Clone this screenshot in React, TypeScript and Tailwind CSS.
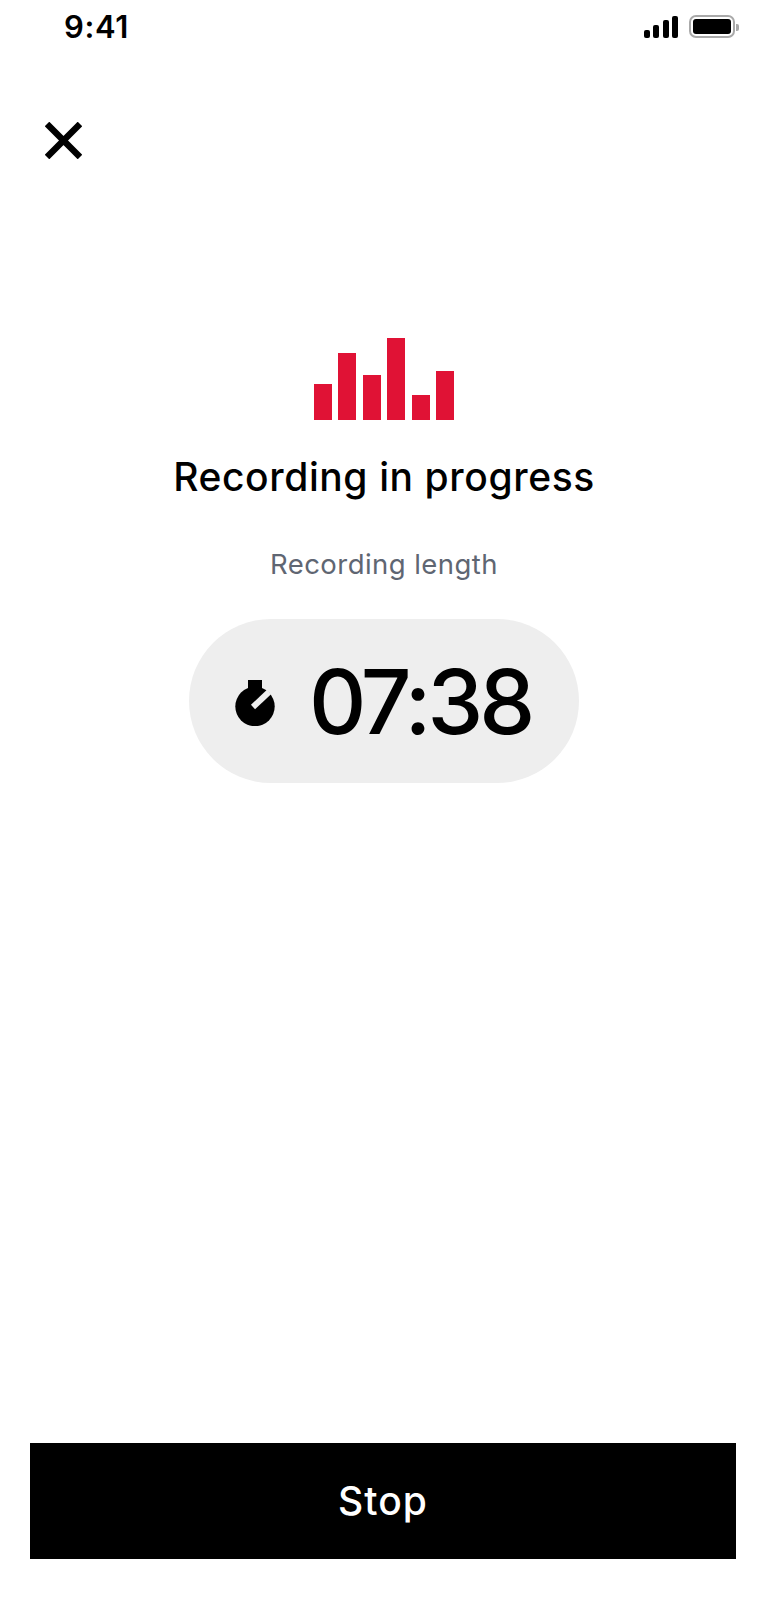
import React from 'react';

const bars = [
  { id: 'a', cls: 'h-[36px]' },
  { id: 'b', cls: 'h-[67px]' },
  { id: 'c', cls: 'h-[45px]' },
  { id: 'd', cls: 'h-[82px]' },
  { id: 'e', cls: 'h-[25px]' },
  { id: 'f', cls: 'h-[49px]' },
];

const signal = ['h-[8px]', 'h-[13px]', 'h-[18px]', 'h-[22px]'];

const StatusBar = () => (
  <div className="flex items-start justify-between h-[54px] pl-[64px] pr-[29px] pt-[15px]">
    <span className="text-[31px] leading-[23px] font-semibold tracking-[0.6px] text-black">9:41</span>
    <div className="flex items-end">
      <div className="flex items-end gap-[3.5px] mr-[11px]">
        {signal.map(h => (
          <div key={h} className={`w-[6px] rounded-[2px] bg-black ${h}`} />
        ))}
      </div>
      <div className="w-[46px] h-[23px] rounded-[7px] border-2 border-[#a9a9a9] p-[2px]">
        <div className="w-full h-full rounded-[3px] bg-black" />
      </div>
      <div className="w-[3px] h-[7px] mb-[7px] ml-[1px] rounded-r-[2px] bg-[#a9a9a9]" />
    </div>
  </div>
);

const App = () => {
  return (
    <div className="w-[768px] h-[1598px] bg-white flex flex-col font-['Inter',sans-serif]">
      <StatusBar />

      <button className="ml-[45px] mt-[68px] w-[37px] h-[37px] text-black">
        <svg viewBox="0 0 37 37" width="37" height="37" fill="none" stroke="currentColor" strokeWidth="6.5">
          <path d="M2 2 L35 35 M35 2 L2 35" />
        </svg>
      </button>

      <div className="flex flex-col items-center mt-[179px] flex-1">
        <div className="flex items-end gap-[6.4px] h-[82px]">
          {bars.map(b => (
            <div key={b.id} className={`w-[18px] bg-[#e01235] ${b.cls}`} />
          ))}
        </div>

        <h1 className="mt-[32px] text-[39px] leading-[50px] font-medium tracking-[0.6px] text-black">Recording in progress</h1>
        <p className="mt-[44px] text-[27.5px] leading-[36px] tracking-[0.45px] text-[#5f6672]">Recording length</p>

        <div className="mt-[37px] w-[390px] h-[164px] rounded-full bg-[#eeeeee] flex items-center pl-[46px]">
          <svg viewBox="0 0 40 46" width="40" height="46" className="mt-[4px]">
            <rect x="13" y="0" width="14" height="9" fill="#000" />
            <circle cx="20" cy="26.5" r="19.7" fill="#000" />
            <path d="M18 27 L34 12" stroke="#eeeeee" strokeWidth="6" fill="none" />
          </svg>
          <span className="ml-[34px] text-[89px] leading-none font-medium text-black tracking-[-4px]">07:38</span>
        </div>
      </div>

      <div className="pl-[30px] pr-[32px] pb-[39px]">
        <button className="w-full h-[116px] bg-black text-white text-[39px] font-medium tracking-[1px]">Stop</button>
      </div>
    </div>
  );
};

export default App;
